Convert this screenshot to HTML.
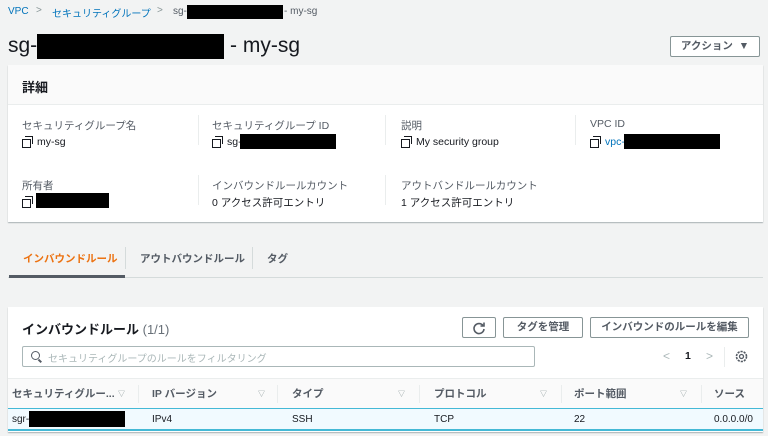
<!DOCTYPE html>
<html><head><meta charset="utf-8"><style>
*{box-sizing:border-box;margin:0;padding:0}
body{width:768px;height:436px;overflow:hidden;background:#f2f3f3;font-family:"Liberation Sans","Noto Sans CJK JP",sans-serif;color:#16191f;position:relative}
.a{position:absolute;white-space:nowrap}
.blk{position:absolute;background:#000}
.lbl{font-size:10.5px;color:#545b64}
.val{font-size:10.5px;color:#16191f}
.cp{display:inline-block;width:11px;height:10px;position:relative;vertical-align:-1px;margin-right:4px}
.cp:before{content:"";position:absolute;left:0;top:3px;width:7px;height:7px;border:1.4px solid #16191f;background:#fff}
.cp:after{content:"";position:absolute;left:3px;top:0;width:7px;height:7px;border:1.4px solid #16191f;border-left:none;border-bottom:none}
.sep{position:absolute;width:1px;background:#eaeded}
.btn{position:absolute;border:1px solid #879596;background:#fff;font-size:10.5px;font-weight:bold;color:#545b64;text-align:center;border-radius:2px}
.th{position:absolute;top:386px;font-size:10.5px;font-weight:bold;color:#545b64}
.tri{position:absolute;top:389px;font-size:7px;color:#879596}
.td{position:absolute;top:414px;font-size:10px;color:#16191f}
</style></head><body>
<div class="a" style="left:8px;top:6px;font-size:10px;color:#0073bb">VPC</div>
<div class="a" style="left:36px;top:5px;font-size:10px;color:#879596">&gt;</div>
<div class="a" style="left:52px;top:5px;font-size:10px;color:#0073bb">セキュリティグループ</div>
<div class="a" style="left:157px;top:5px;font-size:10px;color:#879596">&gt;</div>
<div class="a" style="left:173px;top:6px;font-size:10px;color:#545b64">sg-</div>
<div class="blk" style="left:187px;top:5px;width:96px;height:14px"></div>
<div class="a" style="left:284px;top:6px;font-size:10px;color:#545b64">- my-sg</div>
<div class="a" style="left:8px;top:34px;font-size:21px">sg-</div>
<div class="blk" style="left:37px;top:34px;width:187px;height:25px"></div>
<div class="a" style="left:230px;top:34px;font-size:21px">- my-sg</div>
<div class="btn" style="left:670px;top:36px;width:90px;height:21px;line-height:19px">アクション &nbsp;▼</div>

<div class="a" style="left:8px;top:65px;width:755px;height:157px;background:#fff;box-shadow:0 1px 1px rgba(0,28,36,.3)"></div>
<div class="a" style="left:8px;top:65px;width:755px;height:40px;background:#fafafa;border-bottom:1px solid #eaeded"></div>
<div class="a" style="left:22px;top:77px;font-size:13px;font-weight:bold">詳細</div>
<div class="sep" style="left:198px;top:115px;height:30px"></div>
<div class="sep" style="left:385px;top:115px;height:30px"></div>
<div class="sep" style="left:575px;top:115px;height:30px"></div>
<div class="sep" style="left:198px;top:175px;height:30px"></div>
<div class="sep" style="left:385px;top:175px;height:30px"></div>
<div class="a lbl" style="left:22px;top:118px">セキュリティグループ名</div>
<div class="a val" style="left:22px;top:136px"><span class="cp"></span>my-sg</div>
<div class="a lbl" style="left:212px;top:118px">セキュリティグループ ID</div>
<div class="a val" style="left:212px;top:136px"><span class="cp"></span>sg-</div>
<div class="blk" style="left:240px;top:134px;width:96px;height:15px"></div>
<div class="a lbl" style="left:401px;top:118px">説明</div>
<div class="a val" style="left:401px;top:136px"><span class="cp"></span>My security group</div>
<div class="a lbl" style="left:590px;top:118px">VPC ID</div>
<div class="a val" style="left:590px;top:136px;color:#0073bb"><span class="cp"></span>vpc-</div>
<div class="blk" style="left:624px;top:134px;width:96px;height:15px"></div>
<div class="a lbl" style="left:22px;top:178px">所有者</div>
<div class="a val" style="left:22px;top:196px"><span class="cp"></span></div>
<div class="blk" style="left:36px;top:193px;width:73px;height:15px"></div>
<div class="a lbl" style="left:212px;top:178px">インバウンドルールカウント</div>
<div class="a val" style="left:212px;top:195px">0 アクセス許可エントリ</div>
<div class="a lbl" style="left:401px;top:178px">アウトバンドルールカウント</div>
<div class="a val" style="left:401px;top:195px">1 アクセス許可エントリ</div>

<div class="a" style="left:8px;top:277px;width:755px;height:1px;background:#d5dbdb"></div>
<div class="a" style="left:9px;top:275px;width:116px;height:3px;background:#545b64"></div>
<div class="a" style="left:23px;top:251px;font-size:10.5px;font-weight:bold;color:#ec7211">インバウンドルール</div>
<div class="sep" style="left:125px;top:247px;height:22px;background:#d5dbdb"></div>
<div class="a" style="left:140px;top:251px;font-size:10.5px;font-weight:bold;color:#545b64">アウトバウンドルール</div>
<div class="sep" style="left:252px;top:247px;height:22px;background:#d5dbdb"></div>
<div class="a" style="left:267px;top:251px;font-size:10.5px;font-weight:bold;color:#545b64">タグ</div>

<div class="a" style="left:8px;top:307px;width:755px;height:125px;background:#fff;box-shadow:0 1px 1px rgba(0,28,36,.3)"></div>
<div class="a" style="left:22px;top:319px;font-size:13px;font-weight:bold">インバウンドルール <span style="font-weight:normal;color:#687078">(1/1)</span></div>
<div class="btn" style="left:462px;top:317px;width:34px;height:21px"><svg width="14" height="14" viewBox="0 0 14 14" style="margin-top:3px"><path d="M11 4.5A5 5 0 1 0 12 8" fill="none" stroke="#545b64" stroke-width="1.6"/><path d="M12 1.5V5H8.5" fill="none" stroke="#545b64" stroke-width="1.6"/></svg></div>
<div class="btn" style="left:503px;top:317px;width:80px;height:21px;line-height:19px">タグを管理</div>
<div class="btn" style="left:590px;top:317px;width:159px;height:21px;line-height:19px">インバウンドのルールを編集</div>
<div class="a" style="left:22px;top:346px;width:513px;height:21px;border:1px solid #aab7b8;border-radius:2px;background:#fff"></div>
<div class="a" style="left:31px;top:351px;width:9px;height:9px;border:1.6px solid #545b64;border-radius:50%;background:#fff"></div>
<div class="a" style="left:38px;top:360px;width:4px;height:1.6px;background:#545b64;transform:rotate(45deg)"></div>
<div class="a" style="left:48px;top:350px;font-size:10px;color:#aab7b8">セキュリティグループのルールをフィルタリング</div>
<div class="a" style="left:663px;top:349px;font-size:12px;color:#aab7b8">&lt;</div>
<div class="a" style="left:685px;top:350px;font-size:10.5px;font-weight:bold">1</div>
<div class="a" style="left:706px;top:349px;font-size:12px;color:#aab7b8">&gt;</div>
<div class="sep" style="left:724px;top:347px;height:20px"></div>
<svg class="a" style="left:735px;top:350px" width="13" height="13" viewBox="0 0 13 13"><circle cx="6.5" cy="6.5" r="5" fill="none" stroke="#545b64" stroke-width="1.6" stroke-dasharray="2.2 1"/><circle cx="6.5" cy="6.5" r="2" fill="none" stroke="#545b64" stroke-width="1.3"/></svg>

<div class="a" style="left:8px;top:378px;width:755px;height:31px;background:#fafafa;border-top:1px solid #eaeded"></div>
<div class="sep" style="left:138px;top:385px;height:18px"></div>
<div class="sep" style="left:277px;top:385px;height:18px"></div>
<div class="sep" style="left:419px;top:385px;height:18px"></div>
<div class="sep" style="left:561px;top:385px;height:18px"></div>
<div class="sep" style="left:701px;top:385px;height:18px"></div>
<div class="th" style="left:12px">セキュリティグルー...</div><div class="tri" style="left:118px">▽</div>
<div class="th" style="left:152px">IP バージョン</div><div class="tri" style="left:258px">▽</div>
<div class="th" style="left:292px">タイプ</div><div class="tri" style="left:398px">▽</div>
<div class="th" style="left:434px">プロトコル</div><div class="tri" style="left:540px">▽</div>
<div class="th" style="left:574px">ポート範囲</div><div class="tri" style="left:680px">▽</div>
<div class="th" style="left:714px">ソース</div>
<div class="a" style="left:8px;top:408px;width:755px;height:23px;background:#f1faff;border-top:1px solid #44b9d6;border-bottom:2px solid #44b9d6"></div>
<div class="td" style="left:12px">sgr-</div>
<div class="blk" style="left:29px;top:411px;width:96px;height:16px"></div>
<div class="td" style="left:152px">IPv4</div>
<div class="td" style="left:292px">SSH</div>
<div class="td" style="left:434px">TCP</div>
<div class="td" style="left:574px">22</div>
<div class="td" style="left:714px">0.0.0.0/0</div>
</body></html>
